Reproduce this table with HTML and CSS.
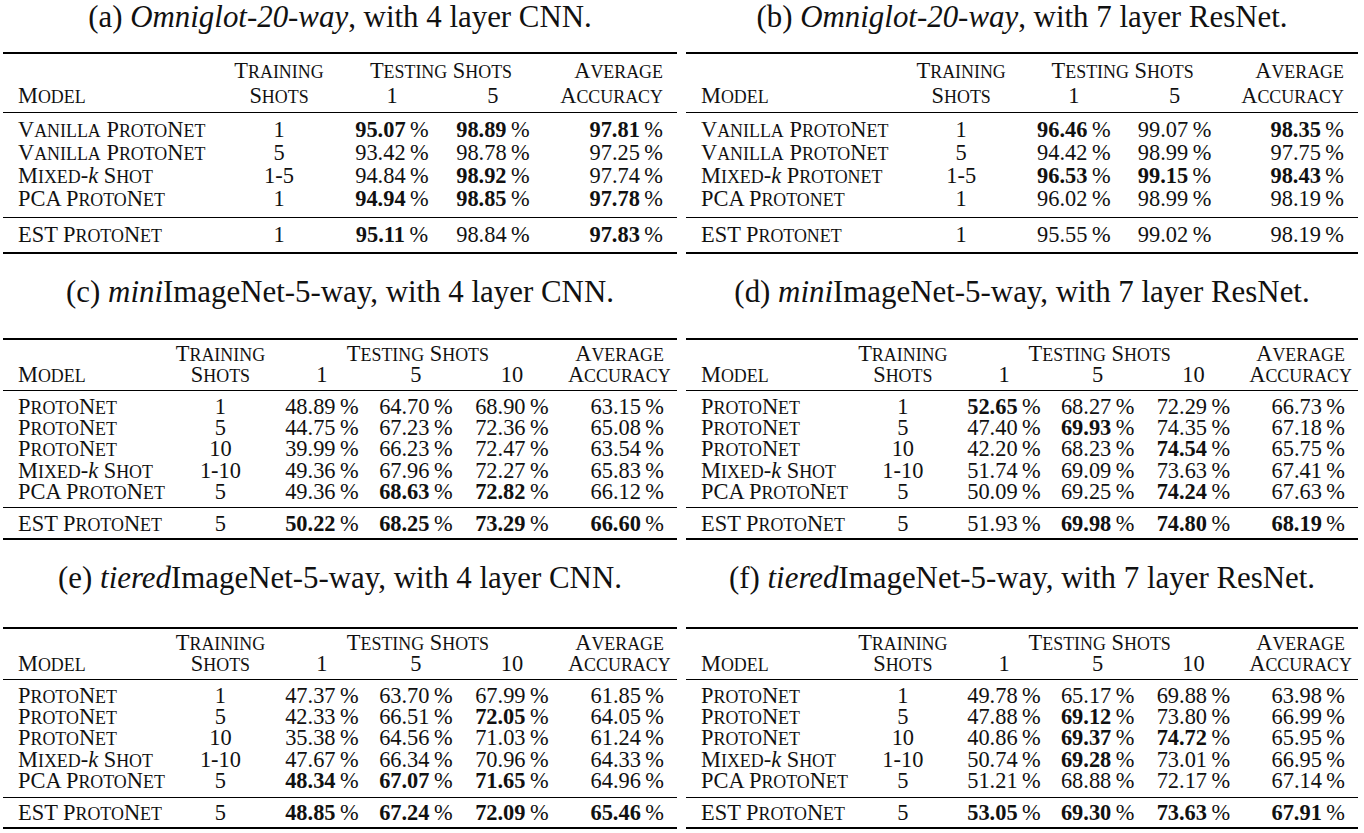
FILE: index.html
```html
<!DOCTYPE html>
<html lang="en">
<head>
<meta charset="utf-8">
<title>Few-shot results</title>
<link rel="stylesheet" href="styles.css">
</head>
<body>
<main class="page">

  <section class="fig">
    <p class="cap first">(a) <i>Omniglot-20-way</i>, with 4 layer CNN.</p>
    <table class="res res4">
      <colgroup><col class="w4a"><col class="w4b"><col class="w4c"><col class="w4d"><col class="w4e"></colgroup>
      <thead>
        <tr class="h1"><th class="l"></th><th>T<small>raining</small></th><th colspan="2">T<small>esting</small> S<small>hots</small></th><th class="r">A<small>verage</small></th></tr>
        <tr class="h2"><th class="l">M<small>odel</small></th><th>S<small>hots</small></th><th>1</th><th>5</th><th class="r">A<small>ccuracy</small></th></tr>
      </thead>
      <tbody class="main">
        <tr><td class="l">V<small>anilla</small> P<small>roto</small>N<small>et</small></td><td>1</td><td><b>95.07</b>&#8201;%</td><td><b>98.89</b>&#8201;%</td><td class="r"><b>97.81</b>&#8201;%</td></tr>
        <tr><td class="l">V<small>anilla</small> P<small>roto</small>N<small>et</small></td><td>5</td><td>93.42&#8201;%</td><td>98.78&#8201;%</td><td class="r">97.25&#8201;%</td></tr>
        <tr><td class="l">M<small>ixed</small>-<i>k</i> S<small>hot</small></td><td>1-5</td><td>94.84&#8201;%</td><td><b>98.92</b>&#8201;%</td><td class="r">97.74&#8201;%</td></tr>
        <tr><td class="l">PCA P<small>roto</small>N<small>et</small></td><td>1</td><td><b>94.94</b>&#8201;%</td><td><b>98.85</b>&#8201;%</td><td class="r"><b>97.78</b>&#8201;%</td></tr>
      </tbody>
      <tbody class="est">
        <tr><td class="l">EST P<small>roto</small>N<small>et</small></td><td>1</td><td><b>95.11</b>&#8201;%</td><td>98.84&#8201;%</td><td class="r"><b>97.83</b>&#8201;%</td></tr>
      </tbody>
    </table>
  </section>

  <section class="fig">
    <p class="cap first">(b) <i>Omniglot-20-way</i>, with 7 layer ResNet.</p>
    <table class="res res4">
      <colgroup><col class="w4a"><col class="w4b"><col class="w4c"><col class="w4d"><col class="w4e"></colgroup>
      <thead>
        <tr class="h1"><th class="l"></th><th>T<small>raining</small></th><th colspan="2">T<small>esting</small> S<small>hots</small></th><th class="r">A<small>verage</small></th></tr>
        <tr class="h2"><th class="l">M<small>odel</small></th><th>S<small>hots</small></th><th>1</th><th>5</th><th class="r">A<small>ccuracy</small></th></tr>
      </thead>
      <tbody class="main">
        <tr><td class="l">V<small>anilla</small> P<small>roto</small>N<small>et</small></td><td>1</td><td><b>96.46</b>&#8201;%</td><td>99.07&#8201;%</td><td class="r"><b>98.35</b>&#8201;%</td></tr>
        <tr><td class="l">V<small>anilla</small> P<small>roto</small>N<small>et</small></td><td>5</td><td>94.42&#8201;%</td><td>98.99&#8201;%</td><td class="r">97.75&#8201;%</td></tr>
        <tr><td class="l">M<small>ixed</small>-<i>k</i> P<small>rotonet</small></td><td>1-5</td><td><b>96.53</b>&#8201;%</td><td><b>99.15</b>&#8201;%</td><td class="r"><b>98.43</b>&#8201;%</td></tr>
        <tr><td class="l">PCA P<small>rotonet</small></td><td>1</td><td>96.02&#8201;%</td><td>98.99&#8201;%</td><td class="r">98.19&#8201;%</td></tr>
      </tbody>
      <tbody class="est">
        <tr><td class="l">EST P<small>rotonet</small></td><td>1</td><td>95.55&#8201;%</td><td>99.02&#8201;%</td><td class="r">98.19&#8201;%</td></tr>
      </tbody>
    </table>
  </section>

  <section class="fig">
    <p class="cap">(c) <i>mini</i>ImageNet-5-way, with 4 layer CNN.</p>
    <table class="res res5">
      <colgroup><col class="w5a"><col class="w5b"><col class="w5c"><col class="w5d"><col class="w5e"><col class="w5f"></colgroup>
      <thead>
        <tr class="h1"><th class="l"></th><th>T<small>raining</small></th><th colspan="3">T<small>esting</small> S<small>hots</small></th><th class="r">A<small>verage</small></th></tr>
        <tr class="h2"><th class="l">M<small>odel</small></th><th>S<small>hots</small></th><th>1</th><th>5</th><th>10</th><th class="r">A<small>ccuracy</small></th></tr>
      </thead>
      <tbody class="main">
        <tr><td class="l">P<small>roto</small>N<small>et</small></td><td>1</td><td>48.89&#8201;%</td><td>64.70&#8201;%</td><td>68.90&#8201;%</td><td class="r">63.15&#8201;%</td></tr>
        <tr><td class="l">P<small>roto</small>N<small>et</small></td><td>5</td><td>44.75&#8201;%</td><td>67.23&#8201;%</td><td>72.36&#8201;%</td><td class="r">65.08&#8201;%</td></tr>
        <tr><td class="l">P<small>roto</small>N<small>et</small></td><td>10</td><td>39.99&#8201;%</td><td>66.23&#8201;%</td><td>72.47&#8201;%</td><td class="r">63.54&#8201;%</td></tr>
        <tr><td class="l">M<small>ixed</small>-<i>k</i> S<small>hot</small></td><td>1-10</td><td>49.36&#8201;%</td><td>67.96&#8201;%</td><td>72.27&#8201;%</td><td class="r">65.83&#8201;%</td></tr>
        <tr><td class="l">PCA P<small>roto</small>N<small>et</small></td><td>5</td><td>49.36&#8201;%</td><td><b>68.63</b>&#8201;%</td><td><b>72.82</b>&#8201;%</td><td class="r">66.12&#8201;%</td></tr>
      </tbody>
      <tbody class="est">
        <tr><td class="l">EST P<small>roto</small>N<small>et</small></td><td>5</td><td><b>50.22</b>&#8201;%</td><td><b>68.25</b>&#8201;%</td><td><b>73.29</b>&#8201;%</td><td class="r"><b>66.60</b>&#8201;%</td></tr>
      </tbody>
    </table>
  </section>

  <section class="fig">
    <p class="cap">(d) <i>mini</i>ImageNet-5-way, with 7 layer ResNet.</p>
    <table class="res res5">
      <colgroup><col class="w5a"><col class="w5b"><col class="w5c"><col class="w5d"><col class="w5e"><col class="w5f"></colgroup>
      <thead>
        <tr class="h1"><th class="l"></th><th>T<small>raining</small></th><th colspan="3">T<small>esting</small> S<small>hots</small></th><th class="r">A<small>verage</small></th></tr>
        <tr class="h2"><th class="l">M<small>odel</small></th><th>S<small>hots</small></th><th>1</th><th>5</th><th>10</th><th class="r">A<small>ccuracy</small></th></tr>
      </thead>
      <tbody class="main">
        <tr><td class="l">P<small>roto</small>N<small>et</small></td><td>1</td><td><b>52.65</b>&#8201;%</td><td>68.27&#8201;%</td><td>72.29&#8201;%</td><td class="r">66.73&#8201;%</td></tr>
        <tr><td class="l">P<small>roto</small>N<small>et</small></td><td>5</td><td>47.40&#8201;%</td><td><b>69.93</b>&#8201;%</td><td>74.35&#8201;%</td><td class="r">67.18&#8201;%</td></tr>
        <tr><td class="l">P<small>roto</small>N<small>et</small></td><td>10</td><td>42.20&#8201;%</td><td>68.23&#8201;%</td><td><b>74.54</b>&#8201;%</td><td class="r">65.75&#8201;%</td></tr>
        <tr><td class="l">M<small>ixed</small>-<i>k</i> S<small>hot</small></td><td>1-10</td><td>51.74&#8201;%</td><td>69.09&#8201;%</td><td>73.63&#8201;%</td><td class="r">67.41&#8201;%</td></tr>
        <tr><td class="l">PCA P<small>roto</small>N<small>et</small></td><td>5</td><td>50.09&#8201;%</td><td>69.25&#8201;%</td><td><b>74.24</b>&#8201;%</td><td class="r">67.63&#8201;%</td></tr>
      </tbody>
      <tbody class="est">
        <tr><td class="l">EST P<small>roto</small>N<small>et</small></td><td>5</td><td>51.93&#8201;%</td><td><b>69.98</b>&#8201;%</td><td><b>74.80</b>&#8201;%</td><td class="r"><b>68.19</b>&#8201;%</td></tr>
      </tbody>
    </table>
  </section>

  <section class="fig">
    <p class="cap last">(e) <i>tiered</i>ImageNet-5-way, with 4 layer CNN.</p>
    <table class="res res5">
      <colgroup><col class="w5a"><col class="w5b"><col class="w5c"><col class="w5d"><col class="w5e"><col class="w5f"></colgroup>
      <thead>
        <tr class="h1"><th class="l"></th><th>T<small>raining</small></th><th colspan="3">T<small>esting</small> S<small>hots</small></th><th class="r">A<small>verage</small></th></tr>
        <tr class="h2"><th class="l">M<small>odel</small></th><th>S<small>hots</small></th><th>1</th><th>5</th><th>10</th><th class="r">A<small>ccuracy</small></th></tr>
      </thead>
      <tbody class="main">
        <tr><td class="l">P<small>roto</small>N<small>et</small></td><td>1</td><td>47.37&#8201;%</td><td>63.70&#8201;%</td><td>67.99&#8201;%</td><td class="r">61.85&#8201;%</td></tr>
        <tr><td class="l">P<small>roto</small>N<small>et</small></td><td>5</td><td>42.33&#8201;%</td><td>66.51&#8201;%</td><td><b>72.05</b>&#8201;%</td><td class="r">64.05&#8201;%</td></tr>
        <tr><td class="l">P<small>roto</small>N<small>et</small></td><td>10</td><td>35.38&#8201;%</td><td>64.56&#8201;%</td><td>71.03&#8201;%</td><td class="r">61.24&#8201;%</td></tr>
        <tr><td class="l">M<small>ixed</small>-<i>k</i> S<small>hot</small></td><td>1-10</td><td>47.67&#8201;%</td><td>66.34&#8201;%</td><td>70.96&#8201;%</td><td class="r">64.33&#8201;%</td></tr>
        <tr><td class="l">PCA P<small>roto</small>N<small>et</small></td><td>5</td><td><b>48.34</b>&#8201;%</td><td><b>67.07</b>&#8201;%</td><td><b>71.65</b>&#8201;%</td><td class="r">64.96&#8201;%</td></tr>
      </tbody>
      <tbody class="est">
        <tr><td class="l">EST P<small>roto</small>N<small>et</small></td><td>5</td><td><b>48.85</b>&#8201;%</td><td><b>67.24</b>&#8201;%</td><td><b>72.09</b>&#8201;%</td><td class="r"><b>65.46</b>&#8201;%</td></tr>
      </tbody>
    </table>
  </section>

  <section class="fig">
    <p class="cap last">(f) <i>tiered</i>ImageNet-5-way, with 7 layer ResNet.</p>
    <table class="res res5">
      <colgroup><col class="w5a"><col class="w5b"><col class="w5c"><col class="w5d"><col class="w5e"><col class="w5f"></colgroup>
      <thead>
        <tr class="h1"><th class="l"></th><th>T<small>raining</small></th><th colspan="3">T<small>esting</small> S<small>hots</small></th><th class="r">A<small>verage</small></th></tr>
        <tr class="h2"><th class="l">M<small>odel</small></th><th>S<small>hots</small></th><th>1</th><th>5</th><th>10</th><th class="r">A<small>ccuracy</small></th></tr>
      </thead>
      <tbody class="main">
        <tr><td class="l">P<small>roto</small>N<small>et</small></td><td>1</td><td>49.78&#8201;%</td><td>65.17&#8201;%</td><td>69.88&#8201;%</td><td class="r">63.98&#8201;%</td></tr>
        <tr><td class="l">P<small>roto</small>N<small>et</small></td><td>5</td><td>47.88&#8201;%</td><td><b>69.12</b>&#8201;%</td><td>73.80&#8201;%</td><td class="r">66.99&#8201;%</td></tr>
        <tr><td class="l">P<small>roto</small>N<small>et</small></td><td>10</td><td>40.86&#8201;%</td><td><b>69.37</b>&#8201;%</td><td><b>74.72</b>&#8201;%</td><td class="r">65.95&#8201;%</td></tr>
        <tr><td class="l">M<small>ixed</small>-<i>k</i> S<small>hot</small></td><td>1-10</td><td>50.74&#8201;%</td><td><b>69.28</b>&#8201;%</td><td>73.01&#8201;%</td><td class="r">66.95&#8201;%</td></tr>
        <tr><td class="l">PCA P<small>roto</small>N<small>et</small></td><td>5</td><td>51.21&#8201;%</td><td>68.88&#8201;%</td><td>72.17&#8201;%</td><td class="r">67.14&#8201;%</td></tr>
      </tbody>
      <tbody class="est">
        <tr><td class="l">EST P<small>roto</small>N<small>et</small></td><td>5</td><td><b>53.05</b>&#8201;%</td><td><b>69.30</b>&#8201;%</td><td><b>73.63</b>&#8201;%</td><td class="r"><b>67.91</b>&#8201;%</td></tr>
      </tbody>
    </table>
  </section>

</main>
</body>
</html>
```

FILE: styles.css
```css
html, body {
  margin: 0;
  padding: 0;
  background: #ffffff;
}

body {
  font-family: "Liberation Serif", "Times New Roman", serif;
  color: #111111;
}

.page {
  width: 1364px;
  box-sizing: border-box;
  padding: 0 0 0 3px;
  display: grid;
  grid-template-columns: 674px 672px;
  column-gap: 9px;
  row-gap: 21px;
}

.fig {
  margin: 0;
}

.cap {
  margin: 0 0 29px;
  font-size: 30.9px;
  line-height: 34px;
  text-align: center;
  white-space: nowrap;
}

.cap.first { margin-bottom: 18px; }
.cap.last { margin-bottom: 32px; }

.res {
  width: 100%;
  table-layout: fixed;
  border-collapse: separate;
  border-spacing: 0;
  font-size: 22.4px;
}

.res th,
.res td {
  padding: 0;
  font-weight: normal;
  text-align: center;
  white-space: nowrap;
}

/* small capitals, set as in the typeset original */
.res small {
  font-size: 0.8em;
  line-height: 0;
  text-transform: uppercase;
}

.res b,
.res i {
  line-height: 0;
}

.res b { font-weight: bold; }

.res .l {
  text-align: left;
  padding-left: 15px;
}

.res .r {
  text-align: right;
  padding-right: 14px;
}

/* rules */
.res .h1 th { border-top: 2px solid #000; }
.res .h2 th { border-bottom: 1px solid #000; }
.res .main tr:last-child td { border-bottom: 1px solid #000; }
.res .est td { border-bottom: 2px solid #000; }

/* Omniglot tables: two testing columns */
.w4a { width: 31.9%; }
.w4b { width: 18.1%; }
.w4c { width: 15.43%; }
.w4d { width: 14.54%; }
.w4e { width: 20.03%; }

.res4 th { line-height: 25px; }
.res4 td { line-height: 23px; }
.res4 .h1 th { padding-top: 3.5px; }
.res4 .h2 th { padding-bottom: 4.5px; }
.res4 .main tr:first-child td { padding-top: 5px; }
.res4 .main tr:last-child td { padding-bottom: 7px; }
.res4 .est td { padding-top: 4.5px; padding-bottom: 6.5px; }

/* ImageNet tables: three testing columns */
.w5a { width: 25.22%; }
.w5b { width: 14.09%; }
.w5c { width: 16.02%; }
.w5d { width: 11.87%; }
.w5e { width: 16.62%; }
.w5f { width: 16.18%; }

.res5 .r { padding-right: 13px; }
.res5 th { line-height: 21.5px; }
.res5 td { line-height: 21.25px; }
.res5 .h1 th { padding-top: 2.75px; }
.res5 .h2 th { padding-bottom: 4.25px; }
.res5 .main tr:first-child td { padding-top: 4.9px; }
.res5 .main tr:last-child td { padding-bottom: 5.35px; }
.res5 .est td { padding-top: 4.4px; padding-bottom: 3.9px; }
```
